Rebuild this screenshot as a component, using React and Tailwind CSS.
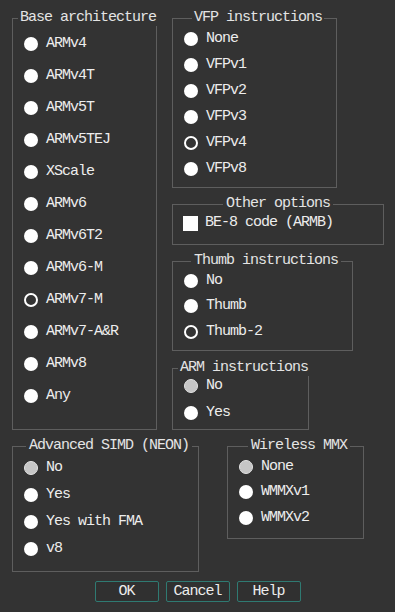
import React from 'react';

const font = { fontFamily: '"Liberation Mono", "DejaVu Sans Mono", monospace' };

function Radio({ state }) {
  if (state === 'on') {
    return <span className="w-[14px] h-[14px] rounded-full border-2 border-white shrink-0" />;
  }
  if (state === 'dis') {
    return <span className="w-[14px] h-[14px] rounded-full bg-[#c6c6c6] border border-[#e4e4e4] shrink-0" />;
  }
  return <span className="w-[14px] h-[14px] rounded-full bg-white shrink-0" />;
}

function Option({ label, state, h }) {
  return (
    <div className={`flex items-center gap-[8px] ${h}`}>
      <Radio state={state} />
      <span className="leading-4">{label}</span>
    </div>
  );
}

function Group({ title, legend, box, rows, body, children }) {
  return (
    <fieldset className={`border border-[#5e5e5e] px-0 pb-0 min-w-0 ${box}`}>
      <legend className={`leading-4 text-[#e4e4e4] whitespace-nowrap ${legend}`}>{title}</legend>
      <div className={`flex flex-col pl-[11px] ${body}`}>
        {rows
          ? rows.map(([label, state]) => <Option key={label} label={label} state={state} h={rows.h} />)
          : children}
      </div>
    </fieldset>
  );
}

function mk(list, h) {
  const r = list.map((l) => (Array.isArray(l) ? l : [l, 'off']));
  r.h = h;
  return r;
}

const baseArch = mk(
  ['ARMv4', 'ARMv4T', 'ARMv5T', 'ARMv5TEJ', 'XScale', 'ARMv6', 'ARMv6T2', 'ARMv6-M', ['ARMv7-M', 'on'], 'ARMv7-A&R', 'ARMv8', 'Any'],
  'h-[32px]'
);
const vfp = mk(['None', 'VFPv1', 'VFPv2', 'VFPv3', ['VFPv4', 'on'], 'VFPv8'], 'h-[26px]');
const thumb = mk(['No', 'Thumb', ['Thumb-2', 'on']], 'h-[25.5px]');
const arm = mk([['No', 'dis'], 'Yes'], 'h-[27px]');
const simd = mk([['No', 'dis'], 'Yes', 'Yes with FMA', 'v8'], 'h-[27px]');
const wmmx = mk([['None', 'dis'], 'WMMXv1', 'WMMXv2'], 'h-[25.5px]');

function Btn({ children }) {
  return (
    <button className="w-[64px] h-[21px] rounded-[2px] border border-[#2f7a72] bg-[#303030] text-[#ececec] leading-4">
      {children}
    </button>
  );
}

export default function App() {
  return (
    <div
      className="w-[395px] h-[612px] bg-[#333333] text-[#ededed] text-[15px] tracking-[-1px] overflow-hidden flex flex-col"
      style={font}
    >
      <div className="flex pl-[12px] pt-[10px]">
        <Group
          title="Base architecture"
          legend="ml-[5px] px-[2px]"
          box="w-[145px] h-[420px]"
          body="mt-[2px]"
          rows={baseArch}
        />
        <div className="flex flex-col ml-[15px]">
          <Group
            title="VFP instructions"
            legend="ml-[19px] px-[2px]"
            box="w-[165px] h-[178px]"
            body="mt-0"
            rows={vfp}
          />
          <Group
            title="Other options"
            legend="mx-auto px-[3px]"
            box="w-[212px] h-[49px] mt-[8px]"
            body="pl-[10px]"
          >
            <div className="flex items-center gap-[7px] h-[22px] -ml-[1px]">
              <span className="w-[15px] h-[15px] bg-white shrink-0" />
              <span className="leading-4">BE-8 code (ARMB)</span>
            </div>
          </Group>
          <Group
            title="Thumb instructions"
            legend="ml-[18px] px-[3px]"
            box="w-[181px] h-[98px] mt-[8px]"
            body="-mt-[1px]"
            rows={thumb}
          />
          <Group
            title="ARM instructions"
            legend="ml-[5px] px-[2px]"
            box="w-[137px] h-[70px] mt-[9px]"
            body="-mt-[4px]"
            rows={arm}
          />
        </div>
      </div>
      <div className="flex pl-[12px] mt-[8px]">
        <Group
          title="Advanced SIMD (NEON)"
          legend="ml-[13px] px-[3px]"
          box="w-[187px] h-[134px]"
          body=""
          rows={simd}
        />
        <Group
          title="Wireless MMX"
          legend="ml-[20px] px-[3px]"
          box="w-[137px] h-[101px] ml-[28px]"
          body=""
          rows={wmmx}
        />
      </div>
      <div className="flex justify-center gap-[7px] mt-[9px]">
        <Btn>OK</Btn>
        <Btn>Cancel</Btn>
        <Btn>Help</Btn>
      </div>
    </div>
  );
}
